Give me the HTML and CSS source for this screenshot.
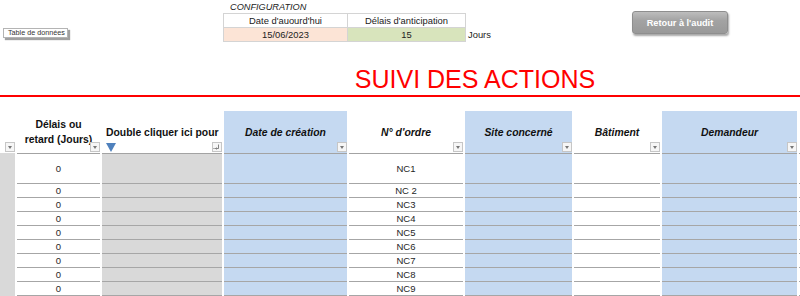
FILE: index.html
```html
<!DOCTYPE html>
<html lang="fr">
<head>
    <meta charset="UTF-8">
    <title>Suivi des actions</title>
    <link rel="stylesheet" href="styles.css">
</head>
<body>

<!-- Bandeau du haut -->
<div class="top">
    <div class="data-tag">Table de données</div>
    <div class="config">
        <div class="config-label">CONFIGURATION</div>
        <div class="config-row">
            <div class="config-table">
                <div>Date d'auourd'hui</div>
                <div>Délais d'anticipation</div>
                <div class="cfg-date">15/06/2023</div>
                <div class="cfg-delay">15</div>
            </div>
            <span class="cfg-unit">Jours</span>
        </div>
    </div>
    <div class="btn-back">Retour à l'audit</div>
</div>

<div class="banner">
    <h1 class="title">SUIVI DES ACTIONS</h1>
</div>

<!-- Tableau de suivi -->
<div class="sheet">
    <div class="hd side"><span class="flt"></span></div>
    <div class="hd">Délais ou<br>retard (Jours)<span class="flt"></span></div>
    <div class="hd left">Double cliquer ici pour
        <svg class="marker" width="10" height="9" viewBox="0 0 10 9"><polygon points="0,0 10,0 5,9" fill="#4f81bd"/></svg>
        <span class="flt sort"><svg width="8" height="8" viewBox="0 0 8 8"><path d="M5.5 1.5 V5.5 H2.5 M3.5 4.5 L2.5 5.5 L3.5 6.5" stroke="#666" stroke-width="0.8" fill="none"/><rect x="0.5" y="5" width="1" height="1" fill="#666"/></svg></span>
    </div>
    <div class="hd it blue">Date de création<span class="flt"></span></div>
    <div class="hd it">N° d'ordre<span class="flt"></span></div>
    <div class="hd it blue">Site concerné<span class="flt"></span></div>
    <div class="hd it">Bâtiment<span class="flt"></span></div>
    <div class="hd it blue">Demandeur<span class="flt"></span></div>
    <div class="hd"></div>

    <div class="c side"></div><div class="c">0</div><div class="c gray"></div><div class="c blue"></div><div class="c">NC1</div><div class="c blue"></div><div class="c"></div><div class="c blue"></div><div class="c"></div>
    <div class="c side"></div><div class="c">0</div><div class="c gray"></div><div class="c blue"></div><div class="c">NC 2</div><div class="c blue"></div><div class="c"></div><div class="c blue"></div><div class="c"></div>
    <div class="c side"></div><div class="c">0</div><div class="c gray"></div><div class="c blue"></div><div class="c">NC3</div><div class="c blue"></div><div class="c"></div><div class="c blue"></div><div class="c"></div>
    <div class="c side"></div><div class="c">0</div><div class="c gray"></div><div class="c blue"></div><div class="c">NC4</div><div class="c blue"></div><div class="c"></div><div class="c blue"></div><div class="c"></div>
    <div class="c side"></div><div class="c">0</div><div class="c gray"></div><div class="c blue"></div><div class="c">NC5</div><div class="c blue"></div><div class="c"></div><div class="c blue"></div><div class="c"></div>
    <div class="c side"></div><div class="c">0</div><div class="c gray"></div><div class="c blue"></div><div class="c">NC6</div><div class="c blue"></div><div class="c"></div><div class="c blue"></div><div class="c"></div>
    <div class="c side"></div><div class="c">0</div><div class="c gray"></div><div class="c blue"></div><div class="c">NC7</div><div class="c blue"></div><div class="c"></div><div class="c blue"></div><div class="c"></div>
    <div class="c side"></div><div class="c">0</div><div class="c gray"></div><div class="c blue"></div><div class="c">NC8</div><div class="c blue"></div><div class="c"></div><div class="c blue"></div><div class="c"></div>
    <div class="c side"></div><div class="c">0</div><div class="c gray"></div><div class="c blue"></div><div class="c">NC9</div><div class="c blue"></div><div class="c"></div><div class="c blue"></div><div class="c"></div>
</div>

</body>
</html>
```

FILE: styles.css
```css
body {
    margin: 0;
    font-family: "Liberation Sans", Arial, sans-serif;
    color: #000;
    background: #fff;
    overflow: hidden;
}

/* Bandeau du haut */
.top {
    display: flex;
    align-items: flex-start;
    height: 67px;
}

.data-tag {
    margin: 28px 0 0 3px;
    width: 65px;
    height: 10px;
    box-sizing: border-box;
    border: 1px solid #b4b4b4;
    box-shadow: 2px 2px 1px #a0a0a0;
    padding-left: 4px;
    font-size: 7.2px;
    line-height: 8px;
    color: #333;
    white-space: nowrap;
}

.config {
    margin: 1px 0 0 155px;
}

.config-label {
    font-style: italic;
    font-size: 9.2px;
    line-height: 12px;
    padding-left: 7px;
    color: #222;
}

.config-row {
    display: flex;
    align-items: flex-end;
}

.config-table {
    display: grid;
    grid-template-columns: 124px 118px;
    grid-auto-rows: 14px;
    border-left: 1px solid #d4d4d4;
    border-top: 1px solid #d4d4d4;
}

.config-table div {
    box-sizing: border-box;
    border-right: 1px solid #d4d4d4;
    border-bottom: 1px solid #d4d4d4;
    text-align: center;
    font-size: 9.4px;
    line-height: 13px;
    color: #222;
}

.config-table .cfg-date {
    background: #fce4d6;
}

.config-table .cfg-delay {
    background: #d8e4bc;
}

.cfg-unit {
    font-size: 9.4px;
    line-height: 14px;
    padding-left: 2px;
    color: #222;
}

.btn-back {
    margin: 11px 72px 0 auto;
    width: 96px;
    height: 23px;
    box-sizing: border-box;
    border: 1px solid #8e8e8e;
    border-radius: 3px;
    background: linear-gradient(#bdbdbd, #a3a3a3 40%, #999);
    box-shadow: 1px 2px 2px rgba(0, 0, 0, 0.35);
    display: flex;
    align-items: center;
    justify-content: center;
    color: #fff;
    font-weight: bold;
    font-size: 9.2px;
}

/* Titre */
.banner {
    border-bottom: 2px solid #ff0000;
    padding-bottom: 3px;
}

.title {
    margin: 0 0 0 150px;
    height: 25px;
    text-align: center;
    font-weight: normal;
    font-size: 25px;
    line-height: 25px;
    color: #ff0000;
}

/* Tableau */
.sheet {
    margin-top: 14px;
    display: grid;
    grid-template-columns: 15px 83px 120px 123px 114px 107px 86px 135px 1fr;
    grid-template-rows: 43px 30px;
    grid-auto-rows: 14px;
    column-gap: 2px;
}

.hd {
    position: relative;
    box-sizing: border-box;
    border-bottom: 1px solid #a3a3a3;
    display: flex;
    align-items: center;
    justify-content: center;
    text-align: center;
    font-weight: bold;
    font-size: 10.4px;
    line-height: 15px;
    color: #111;
}

.hd.left {
    justify-content: flex-start;
    padding-left: 4px;
    white-space: nowrap;
}

.hd.it {
    font-style: italic;
}

.hd.blue {
    background: #c5d9f1;
}

.hd.side {
    border-bottom-color: #d9d9d9;
}

.marker {
    position: absolute;
    left: 4px;
    bottom: 1px;
}

.flt {
    position: absolute;
    right: 0;
    bottom: 1px;
    width: 10px;
    height: 10px;
    box-sizing: border-box;
    border: 1px solid #c6c6c6;
    background: #f6f6f6;
    display: flex;
    align-items: center;
    justify-content: center;
}

.flt::after {
    content: "";
    border-left: 2.5px solid transparent;
    border-right: 2.5px solid transparent;
    border-top: 3px solid #777;
}

.flt.sort::after {
    display: none;
}

.c {
    box-sizing: border-box;
    border-bottom: 1px solid #a6a6a6;
    display: flex;
    align-items: center;
    justify-content: center;
    font-size: 9.5px;
    color: #262626;
}

.c.side {
    background: #d9d9d9;
    border-bottom-color: #d9d9d9;
}

.c.gray {
    background: #d9d9d9;
}

.c.blue {
    background: #c5d9f1;
}
```
